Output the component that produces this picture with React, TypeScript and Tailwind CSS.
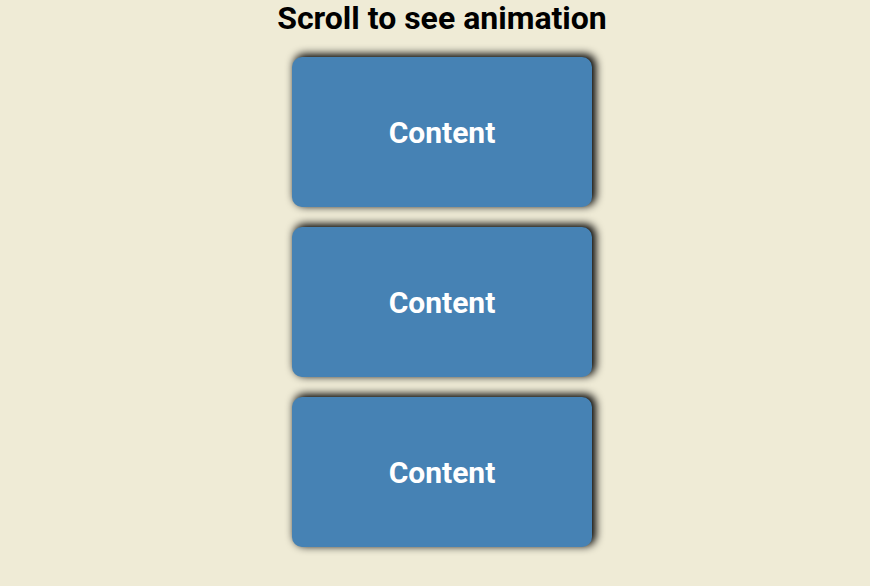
export default function App() {
  const boxes = [1, 2, 3];
  return (
    <div
      className="min-h-[586px] w-full bg-[#efebd6] pl-[14px] flex flex-col items-center"
      style={{ fontFamily: "Roboto, 'Noto Sans', sans-serif" }}
    >
      <h1 className="text-[32px] font-bold leading-[36px] text-black mt-0">
        Scroll to see animation
      </h1>
      <div className="mt-[21px] flex flex-col gap-[20px]">
        {boxes.map((b) => (
          <div
            key={b}
            className="w-[300px] h-[150px] rounded-[10px] bg-[#4682b4] flex items-center justify-center shadow-[3px_-2px_9px_1px_#000]"
          >
            <span className="text-white text-[30px] font-bold">Content</span>
          </div>
        ))}
      </div>
    </div>
  );
}
